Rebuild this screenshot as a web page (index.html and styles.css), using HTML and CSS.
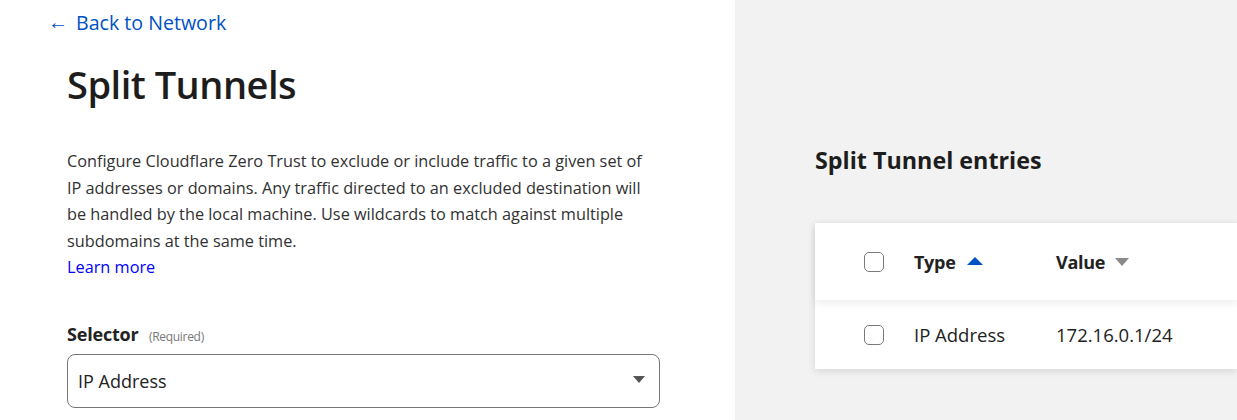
FILE: index.html
```html
<!DOCTYPE html>
<html lang="en">
<head>
<meta charset="utf-8">
<title>Split Tunnels</title>
<link rel="stylesheet" href="styles.css">
</head>
<body>
<main class="page">
  <section class="left">
    <a class="back" href="#"><span class="arrow">←</span>Back to Network</a>
    <div class="content">
      <h1 class="title">Split Tunnels</h1>
      <p class="desc">Configure Cloudflare Zero Trust to exclude or include traffic to a given set of IP addresses or domains. Any traffic directed to an excluded destination will be handled by the local machine. Use wildcards to match against multiple subdomains at the same time.<br><a class="learn" href="#">Learn more</a></p>
      <div class="field">
        <label class="label">Selector <span class="req">(Required)</span></label>
        <div class="select">
          <span>IP Address</span>
          <span class="caret"></span>
        </div>
      </div>
    </div>
  </section>
  <section class="right">
    <h2 class="entries">Split Tunnel entries</h2>
    <div class="card">
      <div class="row head">
        <span class="cb"></span>
        <span class="col type">Type <span class="sort up"></span></span>
        <span class="col value">Value <span class="sort down"></span></span>
      </div>
      <div class="row body">
        <span class="cb"></span>
        <span class="col type">IP Address</span>
        <span class="col value">172.16.0.1/24</span>
      </div>
    </div>
  </section>
</main>
</body>
</html>
```

FILE: styles.css
```css
* { box-sizing: border-box; }
html, body { margin: 0; padding: 0; }
body {
  font-family: "Open Sans", "Noto Sans", sans-serif;
  color: #313131;
  background: #fff;
  overflow: hidden;
}
.page {
  display: flex;
  height: 420px;
}
.left {
  width: 735px;
  flex: none;
  padding-left: 48px;
}
.back {
  display: flex;
  align-items: center;
  height: 44px;
  color: #0051c3;
  text-decoration: none;
  font-size: 19.6px;
  font-weight: 500;
}
.arrow { width: 28px; font-size: 20px; line-height: 1; }
.content {
  padding-left: 19px;
  width: 612px;
}
.title {
  margin: 12px 0 0;
  font-size: 38px;
  font-weight: 600;
  color: #1d1d1d;
  line-height: 56px;
  letter-spacing: -0.5px;
}
.desc {
  margin: 36px 0 0;
  font-size: 16.3px;
  line-height: 26.5px;
  width: 593px;
  color: #313131;
}
.learn { color: #0000ff; text-decoration: none; }
.field { margin-top: 41px; }
.label {
  display: block;
  font-size: 18px;
  font-weight: 700;
  color: #222;
  letter-spacing: -0.2px;
  line-height: 24px;
}
.req {
  font-size: 12px;
  font-weight: 400;
  color: #777;
  margin-left: 6px;
  letter-spacing: -0.3px;
}
.select {
  margin-top: 5px;
  width: 593px;
  height: 54px;
  border: 1px solid #767676;
  border-radius: 8px;
  display: flex;
  align-items: center;
  justify-content: space-between;
  padding: 0 14px 0 10px;
  font-size: 18px;
  color: #222;
}
.caret {
  width: 0; height: 0;
  border-left: 6px solid transparent;
  border-right: 6px solid transparent;
  border-top: 7px solid #555;
  margin-top: -2px;
}
.right {
  flex: 1;
  background: #f2f2f2;
  padding-left: 80px;
  padding-top: 141px;
}
.entries {
  margin: 0;
  font-size: 23.3px;
  font-weight: 700;
  color: #1d1d1d;
  line-height: 38px;
}
.card {
  margin-top: 44px;
  background: #fff;
  box-shadow: 0 2px 8px rgba(0,0,0,0.12);
}
.row {
  display: flex;
  align-items: center;
  padding-left: 49px;
  font-size: 18.5px;
  color: #222;
}
.row.head {
  height: 77px;
  font-weight: 700;
  font-size: 18px;
  position: relative;
  box-shadow: 0 3px 8px rgba(0,0,0,0.08);
}
.row.head .col { letter-spacing: -0.3px; }
.row.body { height: 69px; }
.cb {
  width: 20px; height: 20px;
  border: 1px solid #7a7a7a;
  border-radius: 5px;
  flex: none;
  margin-right: 30px;
}
.col.type { width: 142px; display: flex; align-items: center; }
.col.value { display: flex; align-items: center; }
.sort {
  width: 0; height: 0;
  margin-left: 11px;
  border-left: 8px solid transparent;
  border-right: 8px solid transparent;
}
.sort.up { border-bottom: 8px solid #0051c3; margin-top: -2px; }
.sort.down { border-top: 8px solid #8a8a8a; border-left-width: 7px; border-right-width: 7px; margin-left: 10px; }
```
